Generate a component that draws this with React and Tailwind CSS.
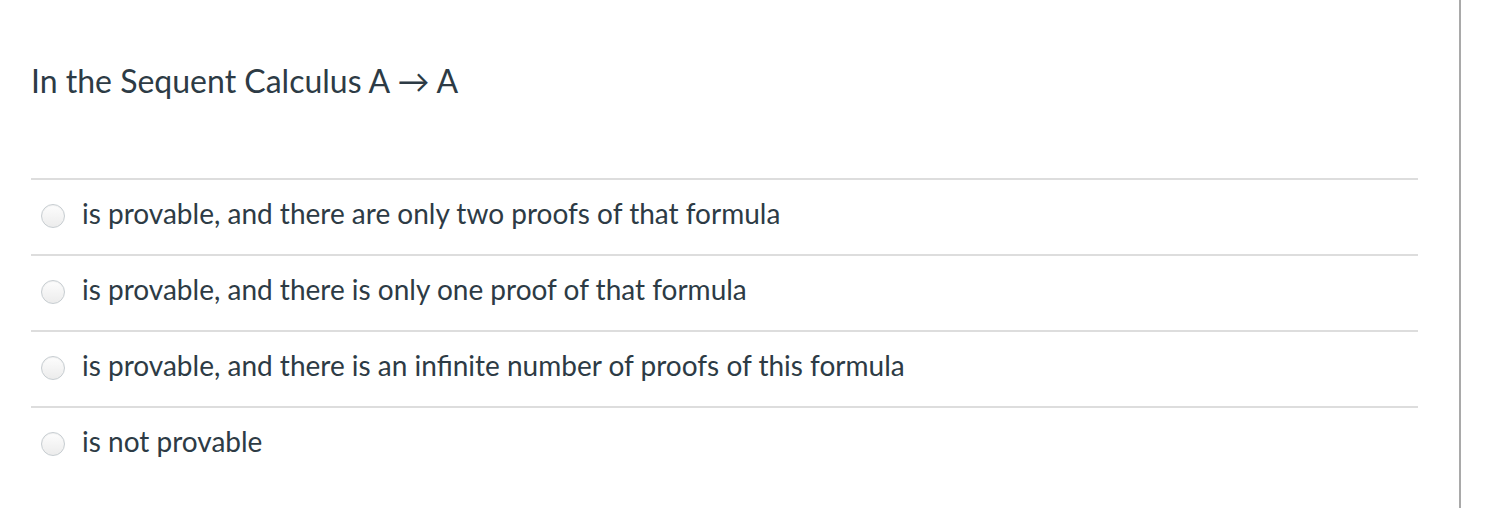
const options = [
  'is provable, and there are only two proofs of that formula',
  'is provable, and there is only one proof of that formula',
  'is provable, and there is an infinite number of proofs of this formula',
  'is not provable',
];

export default function App() {
  return (
    <div className="flex h-[508px] w-[1487px] bg-white" style={{ fontFamily: 'Lato, "Open Sans", sans-serif' }}>
      <div className="h-full w-[1461px] border-r-2 border-[#a9a9a9] pl-[31px] pr-[41px] text-[#2d3b45]">
        <div className="flex h-[178px] items-start pt-[61px]">
          <h2 className="text-[32px] leading-[40px]">In the Sequent Calculus A → A</h2>
        </div>
        <div>
          {options.map((opt) => (
            <label key={opt} className="flex h-[76px] items-center border-t-2 border-[#dddddd]">
              <span className="mb-[3px] ml-[10px] mr-[17px] h-[24px] w-[24px] shrink-0 rounded-full border border-[#c7cdd1] bg-gradient-to-b from-[#fdfdfd] to-[#ececec] shadow-[inset_0_1px_1px_rgba(0,0,0,0.05)]" />
              <span className="mb-[9px] text-[28px] leading-[34px]">{opt}</span>
            </label>
          ))}
        </div>
      </div>
    </div>
  );
}
